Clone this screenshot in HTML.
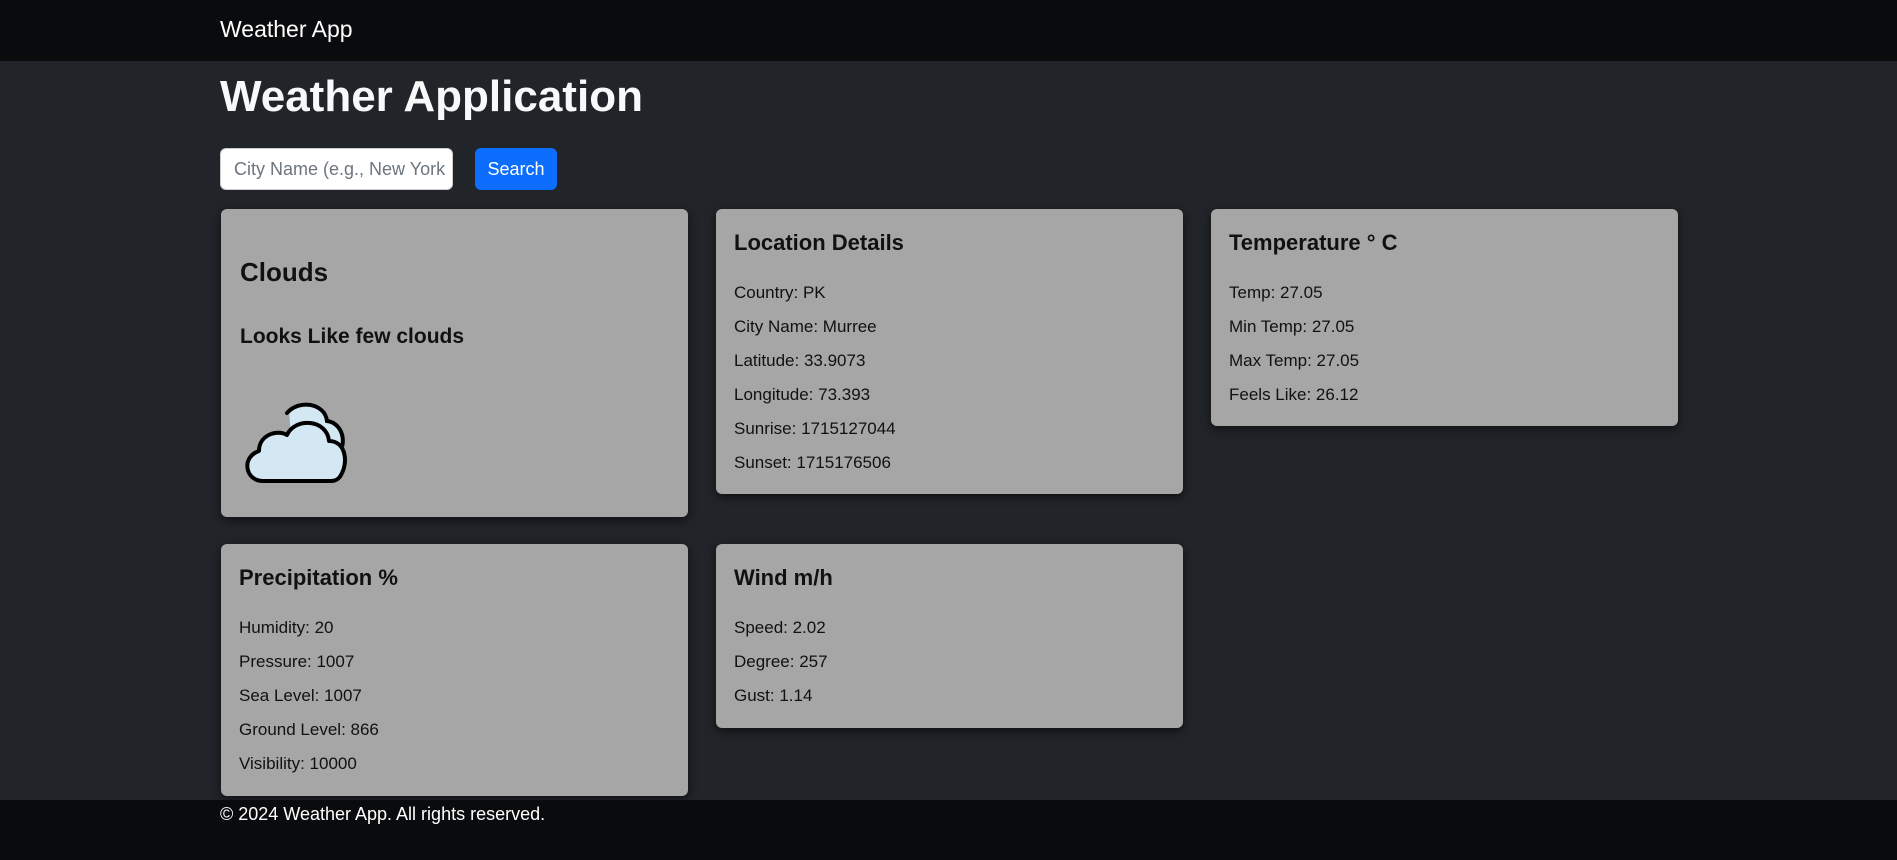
<!DOCTYPE html>
<html><head><meta charset="utf-8"><style>
*{box-sizing:border-box;margin:0;padding:0}
body{width:1897px;height:860px;background:#212529;font-family:"Liberation Sans",sans-serif;position:relative;overflow:hidden}
.nav{position:absolute;left:0;top:0;width:1897px;height:61px;background:#0a0b0d}
.nav span{position:absolute;left:220px;top:16px;color:#fff;font-size:23px}
h1{position:absolute;left:220px;top:72px;color:#f8f9fa;font-size:44px;font-weight:bold}
.inp{position:absolute;left:220px;top:148px;width:233px;height:42px;background:#fff;border-radius:6px;border:1px solid #ccc;color:#6c757d;font-size:18px;padding:10px 13px;white-space:nowrap;overflow:hidden}
.btn{position:absolute;left:475px;top:148px;width:82px;height:42px;background:#0d6efd;border-radius:6px;color:#fff;font-size:18px;text-align:center;line-height:42px}
.card{position:absolute;background:#a6a6a6;border-radius:6px;box-shadow:0 3px 10px rgba(0,0,0,.6);padding:19px 18px;color:#111}
.card h3{font-size:22px;font-weight:bold;margin:2px 0 20px}
.card p{font-size:17px;line-height:34px}
.foot{position:absolute;left:0;top:800px;width:1897px;height:60px;background:#0a0b0d}
.foot span{position:absolute;left:220px;top:4px;color:#fff;font-size:18px}
</style></head><body>
<div class="nav"><span>Weather App</span></div>
<h1>Weather Application</h1>
<div class="inp">City Name (e.g., New York</div>
<div class="btn">Search</div>

<div class="card" style="left:221px;top:209px;width:467px;height:308px">
<div style="position:absolute;left:19px;top:48px;font-size:26px;font-weight:bold">Clouds</div>
<div style="position:absolute;left:19px;top:116px;font-size:21px;font-weight:bold">Looks Like few clouds</div>
<svg style="position:absolute;left:22px;top:190px" width="110" height="86" viewBox="0 0 110 86">
<path d="M46 12 C58 -2 84 2 86 22 C102 24 106 44 96 56 L92 62 L50 62 Z" fill="#d3e8f3" stroke="none"/>
<path d="M44 14 C56 0 82 4 84 22 C100 24 106 46 92 60" fill="none" stroke="#000" stroke-width="4" stroke-linecap="round"/>
<path d="M20 82 C2 82 -2 58 16 52 C16 36 34 30 44 36 C52 18 84 20 86 42 C102 42 106 62 98 76 C96 80 92 82 88 82 Z" fill="#d3e8f3" stroke="#000" stroke-width="4" stroke-linejoin="round"/>
</svg>
</div>

<div class="card" style="left:716px;top:209px;width:467px;height:285px">
<h3>Location Details</h3>
<p>Country: PK</p><p>City Name: Murree</p><p>Latitude: 33.9073</p><p>Longitude: 73.393</p><p>Sunrise: 1715127044</p><p>Sunset: 1715176506</p>
</div>

<div class="card" style="left:1211px;top:209px;width:467px;height:217px">
<h3>Temperature ° C</h3>
<p>Temp: 27.05</p><p>Min Temp: 27.05</p><p>Max Temp: 27.05</p><p>Feels Like: 26.12</p>
</div>

<div class="card" style="left:221px;top:544px;width:467px;height:252px">
<h3>Precipitation %</h3>
<p>Humidity: 20</p><p>Pressure: 1007</p><p>Sea Level: 1007</p><p>Ground Level: 866</p><p>Visibility: 10000</p>
</div>

<div class="card" style="left:716px;top:544px;width:467px;height:184px">
<h3>Wind m/h</h3>
<p>Speed: 2.02</p><p>Degree: 257</p><p>Gust: 1.14</p>
</div>

<div class="foot"><span>© 2024 Weather App. All rights reserved.</span></div>
</body></html>
